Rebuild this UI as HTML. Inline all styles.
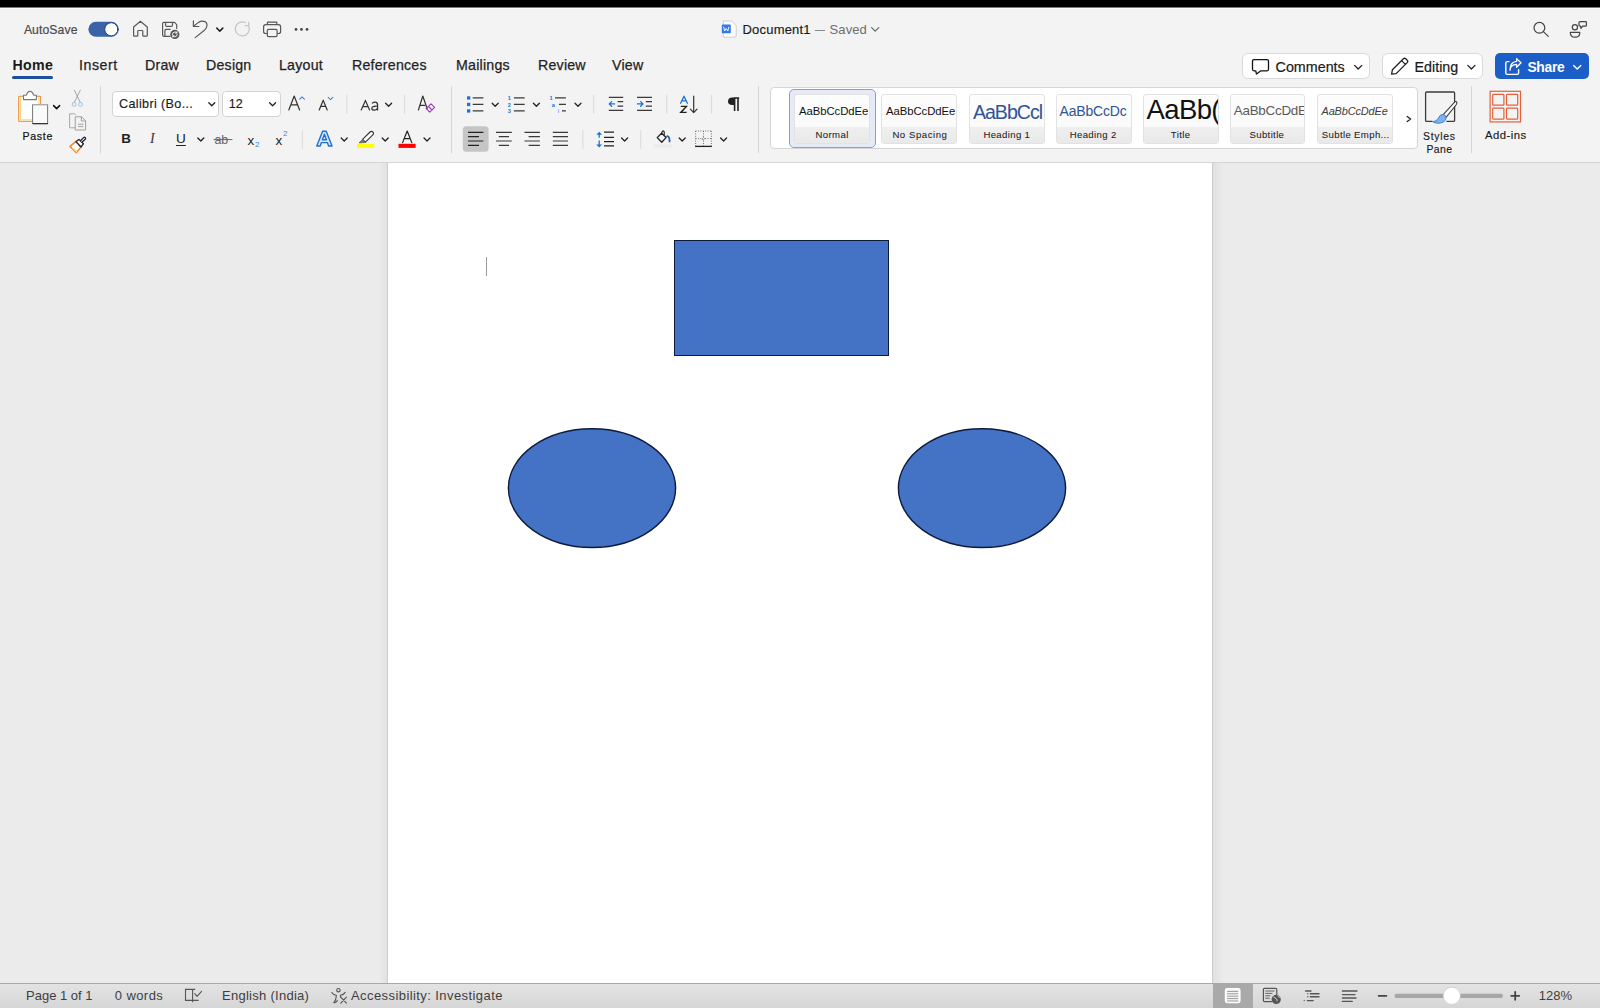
<!DOCTYPE html>
<html><head><meta charset="utf-8">
<style>
*{margin:0;padding:0;box-sizing:border-box}
html,body{width:1600px;height:1008px;overflow:hidden;background:#ebebeb;font-family:"Liberation Sans",sans-serif;}
.a{position:absolute}
.t{position:absolute;white-space:nowrap;line-height:1;font-family:"Liberation Sans",sans-serif;}
svg{position:absolute;overflow:visible}
</style></head><body>
<!-- top black bar -->
<div class="a" style="left:0;top:0;width:1600px;height:7px;background:#000"></div>
<!-- toolbar bg -->
<div class="a" style="left:0;top:7px;width:1600px;height:155px;background:#f3f3f3"></div>
<div class="a" style="left:0;top:7px;width:1600px;height:1px;background:#7a7a7a"></div>
<div class="a" style="left:0;top:8px;width:1600px;height:1px;background:#fcfcfc"></div>
<div class="a" style="left:0;top:162px;width:1600px;height:1px;background:#d4d4d4"></div>
<!-- page -->
<div class="a" style="left:379px;top:163px;width:8px;height:820px;background:linear-gradient(90deg,#ebebeb,#e1e1e1)"></div>
<div class="a" style="left:387px;top:163px;width:1px;height:820px;background:#cecece"></div>
<div class="a" style="left:388px;top:163px;width:824px;height:820px;background:#fff"></div>
<div class="a" style="left:1212px;top:163px;width:1px;height:820px;background:#cecece"></div>
<div class="a" style="left:1213px;top:163px;width:10px;height:820px;background:linear-gradient(90deg,#e0e0e0,#ebebeb)"></div>
<!-- status bar -->
<div class="a" style="left:0;top:983px;width:1600px;height:1px;background:#a8a8a8"></div>
<div class="a" style="left:0;top:984px;width:1600px;height:24px;background:linear-gradient(#e3e3e3,#d6d6d6)"></div>

<!-- document content -->
<div class="a" style="left:486px;top:257px;width:1px;height:19px;background:#9a9a9a"></div>
<div class="a" style="left:674px;top:240px;width:215px;height:116px;background:#4472c4;border:1.5px solid #0e1a3c"></div>
<svg style="left:0;top:0" width="1600" height="1008">
<ellipse cx="592" cy="488.1" rx="83.6" ry="59.4" fill="#4472c4" stroke="#0e1a3c" stroke-width="1.4"/>
<ellipse cx="982" cy="488.1" rx="83.6" ry="59.4" fill="#4472c4" stroke="#0e1a3c" stroke-width="1.4"/>
</svg>

<!-- TITLE ROW -->
<div class="t" style="left:23.9px;top:24.2px;letter-spacing:0.1px;font-size:12.2px;color:#4a4a4a;-webkit-text-stroke:0.2px #4a4a4a">AutoSave</div>


<!-- TITLE ICONS -->
<svg style="left:0;top:0" width="1600" height="170">
<g fill="none" stroke="#585858" stroke-width="1.2" stroke-linejoin="round" stroke-linecap="round">
<!-- toggle -->
<rect x="88.4" y="21.8" width="30.4" height="15" rx="7.5" fill="#3a63a8" stroke="none"/>
<circle cx="111.3" cy="29.3" r="6.6" fill="#fff" stroke="#1e3c78" stroke-width="1"/>
<!-- home -->
<path d="M133.6 27 L140.4 21.3 L147.3 27 V35.4 Q147.3 36.2 146.5 36.2 H143.6 Q142.8 36.2 142.8 35.4 V31.3 Q142.8 30.5 142 30.5 H138.6 Q137.8 30.5 137.8 31.3 V35.4 Q137.8 36.2 137 36.2 H134.4 Q133.6 36.2 133.6 35.4 Z"/>
<!-- save -->
<path d="M170 36.3 H163.8 Q162.6 36.3 162.6 35.1 V23.6 Q162.6 22.4 163.8 22.4 H174.6 L176.7 24.6 V28.6"/>
<path d="M165.6 22.6 V25.3 Q165.6 26.4 166.7 26.4 H171.4 Q172.5 26.4 172.5 25.3 V22.6"/>
<path d="M164.9 35.8 V30.6 Q164.9 29.4 166.1 29.4 H170.2"/>
<circle cx="174.8" cy="34.4" r="4.6" fill="#555" stroke="none"/>
<path d="M172.2 34.6 Q172.4 31.8 175.4 31.9 L176.6 32.6 M176.9 31.6 V33.1 H175.5 M177.4 34.2 Q177.2 37 174.2 36.9 L173 36.2 M172.7 37.2 V35.7 H174.1" stroke="#fff" stroke-width="0.9"/>
<!-- undo -->
<path d="M193.4 20.8 V26.5 H198.9"/>
<path d="M193.6 26.3 L198.5 22.4 Q201.5 20.2 204.8 21.6 Q207.6 23.2 206.8 26.6 Q206.2 28.4 204.4 30.2 L195.2 37.6"/>
<path d="M216.8 28.1 L219.8 31.1 L222.8 28.1" stroke="#222" stroke-width="1.5"/>
<!-- redo -->
<path d="M248.5 25.6 A7 7 0 1 1 245.4 22.6" stroke="#c6c6c6" stroke-width="1.2"/>
<path d="M248.7 22.2 V25.7 H245.2" stroke="#c6c6c6" stroke-width="1.2"/>
<!-- print -->
<path d="M267.4 24.4 V22.6 Q267.4 22.2 267.8 22.2 H276.4 Q276.8 22.2 276.8 22.6 V24.4"/>
<path d="M267.2 33.5 H265.6 Q263.6 33.5 263.6 31.5 V26.8 Q263.6 24.7 265.7 24.7 H278.5 Q280.6 24.7 280.6 26.8 V31.5 Q280.6 33.5 278.6 33.5 H277.1"/>
<rect x="267.3" y="29.4" width="9.8" height="7.2" rx="1.3" fill="#f3f3f3"/>
<!-- dots -->
<circle cx="296" cy="29.4" r="1.35" fill="#444" stroke="none"/>
<circle cx="301.5" cy="29.4" r="1.35" fill="#444" stroke="none"/>
<circle cx="307" cy="29.4" r="1.35" fill="#444" stroke="none"/>
<!-- search -->
<circle cx="1539.4" cy="27.8" r="5.4" stroke="#444"/>
<path d="M1543.4 31.6 L1548.3 36.4" stroke="#444"/>
<!-- collab -->
<circle cx="1574.9" cy="27.2" r="2.6" stroke="#444"/>
<path d="M1570.3 32.4 H1579.8 Q1579.8 37.2 1575 37.2 Q1570.3 37.2 1570.3 32.4 Z" stroke="#444"/>
<path d="M1580 21.6 H1585.6 Q1586.4 21.6 1586.4 22.4 V25.4 Q1586.4 26.2 1585.6 26.2 H1582.6 L1581 28.4 L1580.6 26.2 Q1579 26.2 1579 25.4 V22.6 Q1579 21.6 1580 21.6 Z" stroke="#444"/>
</g>
</svg>


<!-- TITLE -->
<svg style="left:0;top:0" width="1600" height="170">
<path d="M723.3 21 H731.6 L736.2 25.4 V36.4 Q736.2 37.2 735.4 37.2 H724.1 Q723.3 37.2 723.3 36.4 Z" fill="#fdfdfd" stroke="#c9c9c9" stroke-width="0.9"/>
<rect x="721.8" y="24.6" width="9" height="8.6" rx="0.8" fill="#2f7be8"/>
<path d="M723.6 26.8 L724.6 31 L726.2 28.4 L727.8 31 L728.9 26.8" fill="none" stroke="#fff" stroke-width="0.9"/>
<path d="M871.6 27.6 L875.2 31.2 L878.8 27.6" fill="none" stroke="#666" stroke-width="1.2" stroke-linecap="round" stroke-linejoin="round"/>
</svg>
<div class="t" style="left:742.5px;top:22.6px;font-size:13px;color:#1a1a1a;letter-spacing:0.2px;-webkit-text-stroke:0.15px #1a1a1a">Document1</div>
<div class="a" style="left:815px;top:29.6px;width:10.2px;height:1.1px;background:#8a8a8a"></div>
<div class="t" style="left:829.6px;top:22.6px;font-size:13px;color:#6e6e6e;letter-spacing:0.1px">Saved</div>

<!-- RIGHT BUTTONS -->
<div class="a" style="left:1242px;top:53px;width:127.8px;height:26px;border-radius:6px;background:#fff;border:1px solid #d9d9d9"></div>
<div class="a" style="left:1381.5px;top:53px;width:101.5px;height:26px;border-radius:6px;background:#fff;border:1px solid #d9d9d9"></div>
<div class="a" style="left:1494.6px;top:53.4px;width:94.4px;height:25.8px;border-radius:5px;background:#1b5ec7"></div>
<div class="t" style="left:1275.6px;top:60.2px;font-size:14.3px;color:#1a1a1a;-webkit-text-stroke:0.2px #1a1a1a">Comments</div>
<div class="t" style="left:1414.5px;top:60.2px;font-size:14.3px;color:#1a1a1a;-webkit-text-stroke:0.2px #1a1a1a">Editing</div>
<div class="t" style="left:1527.4px;top:60.6px;font-size:13.8px;color:#fff;font-weight:bold;letter-spacing:-0.25px">Share</div>
<svg style="left:0;top:0" width="1600" height="170">
<g fill="none" stroke-linecap="round" stroke-linejoin="round">
<path d="M1254 59.6 H1267 Q1268.5 59.6 1268.5 61.1 V69.3 Q1268.5 70.8 1267 70.8 H1261 L1256.4 74 L1255.8 70.8 H1254 Q1252.5 70.8 1252.5 69.3 V61.1 Q1252.5 59.6 1254 59.6 Z" stroke="#111" stroke-width="1.3"/>
<path d="M1354.6 65.4 L1358.2 69 L1361.8 65.4" stroke="#222" stroke-width="1.3"/>
<path d="M1391.6 74.2 L1392.4 69.8 L1403.4 58.8 Q1404.6 57.6 1405.8 58.8 L1407.2 60.2 Q1408.4 61.4 1407.2 62.6 L1396.2 73.6 Z M1401.6 60.6 L1405.4 64.4" stroke="#222" stroke-width="1.3"/>
<path d="M1467.8 65.4 L1471.4 69 L1475 65.4" stroke="#222" stroke-width="1.3"/>
<path d="M1518.6 69.6 V73 Q1518.6 74.4 1517.2 74.4 H1507.2 Q1505.8 74.4 1505.8 73 V63 Q1505.8 61.6 1507.2 61.6 H1509" stroke="#fff" stroke-width="1.4"/>
<path d="M1510 70.2 Q1510.4 64.8 1516.6 64.4 V67.4 L1521 62.8 L1516.6 58.6 V61.4 Q1509.8 62.2 1510 70.2 Z" stroke="#fff" stroke-width="1.3"/>
<path d="M1573.6 65.4 L1577.2 69 L1580.8 65.4" stroke="#fff" stroke-width="1.4"/>
</g>
</svg>


<!-- RIBBON GROUP 1: CLIPBOARD -->
<svg style="left:0;top:0" width="1600" height="170">
<g fill="none" stroke-linecap="round" stroke-linejoin="round">
<rect x="19.1" y="96.3" width="21.5" height="25" fill="#fff" stroke="#f0872a" stroke-width="1"/>
<path d="M20.6 97.8 V119.8 H39 V97.8" stroke="#f8d98c" stroke-width="1.3"/>
<path d="M23.5 95.2 H26.4 Q27.6 91.4 30 91.4 Q32.4 91.4 33.6 95.2 H36.4 V99.6 H23.5 Z" fill="#fff" stroke="#777" stroke-width="1.1"/>
<rect x="33" y="104.6" width="14.6" height="19" fill="#fafafa" stroke="#777" stroke-width="1"/>
<path d="M33 104.6 H47.6" stroke="#aaa" stroke-width="1.2"/>
<path d="M33 123.6 H47.6" stroke="#333" stroke-width="1.2"/>
<path d="M53.6 105.6 L56.6 108.6 L59.6 105.6" stroke="#111" stroke-width="1.5"/>
<!-- scissors -->
<path d="M74.4 90.2 L80.4 102.6 M80.3 90.2 L74.2 102.6" stroke="#9a9a9a" stroke-width="0.9"/>
<circle cx="74.1" cy="104.4" r="1.9" stroke="#a9c5ea" stroke-width="1.1" fill="#f3f3f3"/>
<circle cx="80.5" cy="104.4" r="1.9" stroke="#a9c5ea" stroke-width="1.1" fill="#f3f3f3"/>
<!-- copy -->
<path d="M75 127.8 H69.6 V113.8 H74.6 L75.8 115" stroke="#a8a8a8" stroke-width="1"/>
<path d="M75.6 116.8 H81.6 L85.6 120.8 V130 H75.6 Z" fill="#f3f3f3" stroke="#a0a0a0" stroke-width="1"/>
<path d="M81.4 117 V121 H85.4 M78.4 124.2 H83 M78.4 126.6 H83" stroke="#a0a0a0" stroke-width="1"/>
<!-- format painter -->
<path d="M70 146.4 L75.8 141.6 L81 147 L76.4 152.6 Z" fill="#fff" stroke="#f0872a" stroke-width="1.5"/>
<path d="M73 148.4 L76.6 151.4" stroke="#f8d98c" stroke-width="1.4"/>
<path d="M76 141.6 L79 139.4 L83.4 143.8 L81 147 Z" fill="#fff" stroke="#1c2233" stroke-width="1.3"/>
<path d="M80.6 140.8 L83.6 137.6 Q84.4 136.8 85.2 137.6 Q86 138.4 85.2 139.2 L82 142.2" fill="#fff" stroke="#1c2233" stroke-width="1.3"/>
</g>
<rect x="100" y="86" width="1" height="67.5" fill="#d6d6d6"/>
</svg>
<div class="t" style="left:22.4px;top:130.6px;font-size:10.6px;color:#111;letter-spacing:0.7px;-webkit-text-stroke:0.2px #111">Paste</div>

<!-- RIBBON GROUP 2: FONT -->
<div class="a" style="left:112.3px;top:91.3px;width:107px;height:26.2px;border-radius:4px;background:#fff;border:1px solid #d3d3d3"></div>
<div class="a" style="left:222px;top:91.3px;width:58.6px;height:26.2px;border-radius:4px;background:#fff;border:1px solid #d3d3d3"></div>
<div class="t" style="left:119px;top:98px;font-size:12.6px;color:#1a1a1a;letter-spacing:0.35px;-webkit-text-stroke:0.15px #1a1a1a">Calibri (Bo...</div>
<div class="t" style="left:228.8px;top:98px;font-size:12.6px;color:#1a1a1a;-webkit-text-stroke:0.15px #1a1a1a">12</div>
<svg style="left:0;top:0" width="1600" height="170">
<g fill="none" stroke-linecap="round" stroke-linejoin="round" stroke="#222" stroke-width="1.3">
<path d="M208.8 102.8 L211.8 105.8 L214.8 102.8"/>
<path d="M269.6 102.8 L272.6 105.8 L275.6 102.8"/>
<!-- grow -->
<path d="M288.8 110 L294.2 96 L299.6 110 M290.8 104.8 H297.6" stroke="#333" stroke-width="1.2"/>
<path d="M299.6 99.2 L302 97 L304.4 99.2" stroke="#3a86d9" stroke-width="1.1"/>
<!-- shrink -->
<path d="M319.2 110 L323.2 100.2 L327.2 110 M320.7 106.4 H325.7" stroke="#333" stroke-width="1.2"/>
<path d="M328.2 97.4 L330.5 99.6 L332.8 97.4" stroke="#3a86d9" stroke-width="1.1"/>
<!-- Aa -->
<path d="M361.2 110 L365.4 100.4 L369.6 110 M362.7 106.6 H368.1" stroke="#333" stroke-width="1.2"/>
<path d="M372.4 103.2 Q373.6 102 375.4 102.2 Q377.6 102.5 377.6 105 V110 M377.6 106.2 Q372 105.8 371.8 108.2 Q371.8 110.2 374.2 110.2 Q376.6 110.2 377.6 108" stroke="#333" stroke-width="1.2"/>
<path d="M385.6 103.2 L388.6 106.2 L391.6 103.2"/>
<!-- clear format -->
<path d="M418.4 110 L422.8 96 L427.2 108.8 M419.8 105.4 H424.6" stroke="#333" stroke-width="1.2"/>
<path d="M426.2 108.6 L431 103.8 L434.6 107.4 L429.8 112.2 Z M428.4 106.4 L432 110" stroke="#a33bb8" stroke-width="1.2"/>
<!-- row 2 -->
<path d="M197.8 138 L200.8 141 L203.8 138"/>
<path d="M341.2 138 L344.2 141 L347.2 138"/>
<path d="M382.2 138 L385.2 141 L388.2 138"/>
<path d="M424 138 L427 141 L430 138"/>
<!-- strike ab -->
<path d="M214 139.6 H232" stroke="#666" stroke-width="1"/>
<!-- text effect A -->
<path d="M316.8 146 L322.6 131.2 H326.2 L332 146 H328.6 L327.4 142.6 H321.4 L320.2 146 Z M322.4 139.8 H326.4 L324.4 134.2 Z" fill="#dbe8f8" stroke="#1c6fd6" stroke-width="1.4"/>
<!-- highlighter -->
<path d="M362.6 139.4 L370 132 Q371.4 130.6 372.8 132 Q374.2 133.4 372.8 134.8 L365.4 142.2 Z" fill="#fff" stroke="#333" stroke-width="1.1"/>
<path d="M362.6 139.4 L359 142.8 L361.6 142.8 L365.4 142.2" fill="#777" stroke="#555" stroke-width="0.8"/>
<rect x="357" y="143.8" width="17.3" height="4.1" fill="#ffff00" stroke="none"/>
<!-- font color A -->
<path d="M402.6 142.6 L407.2 131 L411.8 142.6 M404.3 138.6 H410.1" stroke="#222" stroke-width="1.2"/>
<rect x="398.5" y="143.8" width="17.1" height="4.1" fill="#ff0000" stroke="none"/>
</g>
<rect x="346.3" y="95" width="1" height="18.7" fill="#d9d9d9"/>
<rect x="404.1" y="95" width="1" height="18.7" fill="#d9d9d9"/>
<rect x="301.8" y="130" width="1" height="18.8" fill="#d9d9d9"/>
</svg>
<div class="t" style="left:121.2px;top:132.2px;font-size:13.4px;font-weight:bold;color:#222">B</div>
<div class="t" style="left:150px;top:132px;font-size:14px;font-style:italic;font-family:'Liberation Serif',serif;color:#333">I</div>
<div class="t" style="left:176px;top:132.2px;font-size:13.6px;color:#222;text-decoration:underline;text-underline-offset:1.5px">U</div>
<div class="t" style="left:214.4px;top:134.2px;font-size:12.4px;color:#666">ab</div>
<div class="t" style="left:247.4px;top:133.6px;font-size:13.4px;color:#222">x</div>
<div class="t" style="left:255px;top:140.6px;font-size:8px;color:#3a86d9">2</div>
<div class="t" style="left:275.4px;top:133.6px;font-size:13.4px;color:#222">x</div>
<div class="t" style="left:283px;top:130px;font-size:8px;color:#3a86d9">2</div>


<!-- RIBBON GROUP 3: PARAGRAPH -->
<svg style="left:0;top:0" width="1600" height="170">
<rect x="451" y="86.4" width="1" height="67" fill="#d6d6d6"/>
<rect x="593.2" y="95" width="1" height="18.7" fill="#d9d9d9"/>
<rect x="666.2" y="95" width="1" height="18.7" fill="#d9d9d9"/>
<rect x="711.1" y="95" width="1" height="18.7" fill="#d9d9d9"/>
<rect x="758" y="86" width="1" height="67" fill="#d6d6d6"/>
<rect x="582.4" y="130" width="1" height="18.7" fill="#d9d9d9"/>
<rect x="640.2" y="130" width="1" height="18.7" fill="#d9d9d9"/>
<rect x="462.8" y="126.3" width="25.8" height="25.4" rx="3.5" fill="#c5c5c5"/>
<g fill="#1a73d9">
<rect x="467" y="96.3" width="3.3" height="3.3"/><rect x="467" y="102.8" width="3.3" height="3.3"/><rect x="467" y="109.3" width="3.3" height="3.3"/>
</g>
<g fill="none" stroke="#3a3a3a" stroke-width="1.2">
<path d="M472.7 97.8 H483.4 M472.7 104.3 H483.4 M472.7 110.8 H483.4"/>
<path d="M513.9 97.8 H524.7 M513.9 104.3 H524.7 M513.9 110.8 H524.7"/>
<path d="M555 97.8 H565.9 M559 104.3 H565.9 M562 110.8 H565.9"/>
<!-- indents -->
<path d="M608.8 97.4 H623.2 M617.6 101.6 H623.2 M617.6 106.2 H623.2 M608.8 110.4 H623.2"/>
<path d="M637 97.4 H652 M645.8 101.6 H652 M645.8 106.2 H652 M637 110.4 H652"/>
<!-- align lines -->
<path d="M468 132.4 H483.4 M468 136.7 H479 M468 141 H483.4 M468 145.3 H479" stroke="#222"/>
<path d="M496 132.4 H511.8 M498.8 136.7 H509 M496 141 H511.8 M498.8 145.3 H509"/>
<path d="M524.5 132.4 H539.9 M528.6 136.7 H539.9 M524.5 141 H539.9 M528.6 145.3 H539.9"/>
<path d="M552.8 132.4 H568 M552.8 136.7 H568 M552.8 141 H568 M552.8 145.3 H568"/>
<!-- line spacing lines -->
<path d="M604 132.2 H614 M604 137.4 H614 M604 141.6 H614 M604 145.8 H614" stroke="#222"/>
</g>
<g fill="none" stroke="#1a73d9" stroke-width="1.3" stroke-linecap="round" stroke-linejoin="round">
<path d="M614.6 103.9 H609.2 M611.6 101.6 L609.2 103.9 L611.6 106.2"/>
<path d="M637.4 103.9 H643 M640.6 101.6 L643 103.9 L640.6 106.2"/>

</g>
<g fill="none" stroke="#222" stroke-width="1.3" stroke-linecap="round" stroke-linejoin="round">
<path d="M492.2 103.2 L495.2 106.2 L498.2 103.2"/>
<path d="M533.4 103.2 L536.4 106.2 L539.4 103.2"/>
<path d="M575 103.2 L578 106.2 L581 103.2"/>
<path d="M621.6 138 L624.6 141 L627.6 138"/>
<path d="M679.2 138 L682.2 141 L685.2 138"/>
<path d="M720.6 138 L723.6 141 L726.6 138"/>
<!-- sort arrow -->
<path d="M693.7 96.2 V112.6 M690.4 109.2 L693.7 112.6 L697 109.2" stroke="#333" stroke-width="1.2"/>
<path d="M680.8 106.4 H686.4 L680.8 112.4 H686.6" stroke="#222" stroke-width="1.4" stroke-linecap="butt" stroke-linejoin="miter"/>
<path d="M680.6 103.2 L684 96.2 L687.4 103.2 M681.8 100.8 H686.2" stroke="#1a73d9" stroke-width="1.3"/>
<!-- shading bucket -->
<path d="M657.2 137.6 L661.6 133.2 L666.2 137.4 L661.8 142.2 Z" stroke="#222" stroke-width="1.3"/>
<path d="M661.6 133.2 Q662.4 130.2 663.8 131.2 Q664.6 132 664.2 134.6" stroke="#222" stroke-width="1.2"/>
<path d="M667.2 136.2 Q669.6 136.4 669.6 141.4" stroke="#1a5ab0" stroke-width="1.7"/>
<rect x="654" y="144.4" width="17.6" height="3" fill="#ebebeb" stroke="none"/>
<!-- borders -->
<path d="M695.6 131 H711.4 M695.6 131 V146.4 M711.4 131 V146.4 M703.5 131 V146.4 M695.6 138.6 H711.4" stroke="#666" stroke-width="1" stroke-dasharray="0.9 1.5" stroke-linecap="butt"/>
<path d="M702.3 138.6 L703.5 137.4 L704.7 138.6 L703.5 139.8 Z" stroke="#777" stroke-width="0.8" fill="#fff"/>
<path d="M695.2 146.4 H711.8" stroke="#222" stroke-width="1.3" stroke-linecap="butt"/>
</g>
</svg>

<div class="t" style="left:507.8px;top:95.4px;font-size:5.6px;font-weight:bold;color:#1a73d9;line-height:6.5px">1<br>2<br>3</div>
<div class="t" style="left:549.6px;top:95.4px;font-size:5.6px;font-weight:bold;color:#1a73d9;line-height:6.5px">1</div>
<div class="t" style="left:551.8px;top:101.9px;font-size:5.6px;font-weight:bold;color:#1a73d9;line-height:6.5px">a</div>
<div class="t" style="left:557.8px;top:108.4px;font-size:5.6px;color:#1a73d9;line-height:6.5px">i</div>

<svg style="left:0;top:0" width="1600" height="170">
<path d="M596.3 134.8 L599.2 131.8 L602.1 134.8 Z M596.3 144.6 L599.2 147.6 L602.1 144.6 Z" fill="#1a73d9"/>
<path d="M599.2 133.6 V137.8 M599.2 140.4 V145.8" stroke="#1a73d9" stroke-width="1.3"/>
<path d="M733.8 98 H739.2 M734.6 98.2 V111 M738 98.2 V111" stroke="#222" stroke-width="1.6" fill="none"/>
<path d="M734.6 97.4 H732.2 Q728 97.4 728 101.2 Q728 105 732.2 105 H734.6 Z" fill="#222"/>
</svg>
<!-- STYLES GALLERY -->
<div class="a" style="left:769.8px;top:87.3px;width:648px;height:62.2px;border-radius:4px;background:#fff;border:1px solid #d6d6d6"></div>
<div class="a" style="left:789.4px;top:89px;width:86.2px;height:58.5px;border-radius:5px;background:#e4ebf6;border:1.5px solid #7fa2d6"></div>
<div class="a" style="left:794.4px;top:94.3px;width:76.0px;height:50.1px;border-radius:3px;border:1px solid #e2e2e2;background:linear-gradient(#fdfdfd,#f9f9f9);overflow:hidden"></div>
<div class="a" style="left:795.4px;top:126.9px;width:74.0px;height:16.5px;border-radius:0 0 2px 2px;background:linear-gradient(#efefef,#e9e9e9)"></div>
<div class="a" style="left:794.4px;top:94.3px;width:75.0px;height:32px;overflow:hidden"><div class="t" style="left:4.6px;top:11.5px;font-size:11.3px;color:#111;letter-spacing:-0.05px">AaBbCcDdEe</div></div>
<div class="t" style="left:815.6px;top:130.1px;font-size:9.6px;color:#1a1a1a;-webkit-text-stroke:0.05px #1a1a1a;letter-spacing:0.35px">Normal</div>
<div class="a" style="left:881.3px;top:94.3px;width:76.2px;height:50.1px;border-radius:3px;border:1px solid #e2e2e2;background:linear-gradient(#fdfdfd,#f9f9f9);overflow:hidden"></div>
<div class="a" style="left:882.3px;top:126.9px;width:74.2px;height:16.5px;border-radius:0 0 2px 2px;background:linear-gradient(#efefef,#e9e9e9)"></div>
<div class="a" style="left:881.3px;top:94.3px;width:75.2px;height:32px;overflow:hidden"><div class="t" style="left:4.7px;top:11.5px;font-size:11.3px;color:#111;letter-spacing:-0.05px">AaBbCcDdEe</div></div>
<div class="t" style="left:892.4px;top:130.1px;font-size:9.6px;color:#1a1a1a;-webkit-text-stroke:0.05px #1a1a1a;letter-spacing:0.55px">No Spacing</div>
<div class="a" style="left:969.2px;top:94.3px;width:75.4px;height:50.1px;border-radius:3px;border:1px solid #e2e2e2;background:linear-gradient(#fdfdfd,#f9f9f9);overflow:hidden"></div>
<div class="a" style="left:970.2px;top:126.9px;width:73.4px;height:16.5px;border-radius:0 0 2px 2px;background:linear-gradient(#efefef,#e9e9e9)"></div>
<div class="a" style="left:969.2px;top:94.3px;width:74.4px;height:32px;overflow:hidden"><div class="t" style="left:3.7px;top:8.5px;font-size:19.6px;color:#2f5496;letter-spacing:-1px">AaBbCcl</div></div>
<div class="t" style="left:983.4px;top:130.1px;font-size:9.6px;color:#1a1a1a;-webkit-text-stroke:0.05px #1a1a1a;letter-spacing:0.35px">Heading 1</div>
<div class="a" style="left:1055.6px;top:94.3px;width:76.0px;height:50.1px;border-radius:3px;border:1px solid #e2e2e2;background:linear-gradient(#fdfdfd,#f9f9f9);overflow:hidden"></div>
<div class="a" style="left:1056.6px;top:126.9px;width:74.0px;height:16.5px;border-radius:0 0 2px 2px;background:linear-gradient(#efefef,#e9e9e9)"></div>
<div class="a" style="left:1055.6px;top:94.3px;width:75.0px;height:32px;overflow:hidden"><div class="t" style="left:4.0px;top:9.5px;font-size:14px;color:#2f5496;letter-spacing:-0.2px">AaBbCcDc</div></div>
<div class="t" style="left:1069.7px;top:130.1px;font-size:9.6px;color:#1a1a1a;-webkit-text-stroke:0.05px #1a1a1a;letter-spacing:0.35px">Heading 2</div>
<div class="a" style="left:1143.1px;top:94.3px;width:75.7px;height:50.1px;border-radius:3px;border:1px solid #e2e2e2;background:linear-gradient(#fdfdfd,#f9f9f9);overflow:hidden"></div>
<div class="a" style="left:1144.1px;top:126.9px;width:73.7px;height:16.5px;border-radius:0 0 2px 2px;background:linear-gradient(#efefef,#e9e9e9)"></div>
<div class="a" style="left:1143.1px;top:94.3px;width:74.7px;height:32px;overflow:hidden"><div class="t" style="left:3.4px;top:1.7px;font-size:27.5px;color:#111;letter-spacing:-0.6px">AaBb(</div></div>
<div class="t" style="left:1170.8px;top:130.1px;font-size:9.6px;color:#1a1a1a;-webkit-text-stroke:0.05px #1a1a1a;letter-spacing:0.35px">Title</div>
<div class="a" style="left:1230px;top:94.3px;width:75.4px;height:50.1px;border-radius:3px;border:1px solid #e2e2e2;background:linear-gradient(#fdfdfd,#f9f9f9);overflow:hidden"></div>
<div class="a" style="left:1231px;top:126.9px;width:73.4px;height:16.5px;border-radius:0 0 2px 2px;background:linear-gradient(#efefef,#e9e9e9)"></div>
<div class="a" style="left:1230px;top:94.3px;width:74.4px;height:32px;overflow:hidden"><div class="t" style="left:3.8px;top:9.7px;font-size:13.4px;color:#5a5a5a;letter-spacing:-0.25px">AaBbCcDdE</div></div>
<div class="t" style="left:1249.5px;top:130.1px;font-size:9.6px;color:#1a1a1a;-webkit-text-stroke:0.05px #1a1a1a;letter-spacing:0.35px">Subtitle</div>
<div class="a" style="left:1317.2px;top:94.3px;width:75.6px;height:50.1px;border-radius:3px;border:1px solid #e2e2e2;background:linear-gradient(#fdfdfd,#f9f9f9);overflow:hidden"></div>
<div class="a" style="left:1318.2px;top:126.9px;width:73.6px;height:16.5px;border-radius:0 0 2px 2px;background:linear-gradient(#efefef,#e9e9e9)"></div>
<div class="a" style="left:1317.2px;top:94.3px;width:74.6px;height:32px;overflow:hidden"><div class="t" style="left:4.3px;top:11.7px;font-size:10.9px;color:#404040;font-style:italic;letter-spacing:-0.1px">AaBbCcDdEe</div></div>
<div class="t" style="left:1321.8px;top:130.1px;font-size:9.6px;color:#1a1a1a;-webkit-text-stroke:0.05px #1a1a1a;letter-spacing:0.35px">Subtle Emph...</div>
<svg style="left:0;top:0" width="1600" height="170">
<path d="M1407.2 116.4 L1410.6 119 L1407.2 121.6" fill="none" stroke="#222" stroke-width="1.3" stroke-linecap="round" stroke-linejoin="round"/>
<path d="M1432.6 121.4 H1426.6 Q1425.6 121.4 1425.6 120.4 V93 Q1425.6 92 1426.6 92 H1453.6 Q1454.6 92 1454.6 93 V120.4 Q1454.6 121.4 1453.6 121.4 H1446.4" fill="none" stroke="#3c3c3c" stroke-width="1.3"/>
<path d="M1443.2 114.6 L1454.4 102.4 Q1456.2 100.8 1456.8 102.2 Q1457.2 103.4 1456 105 L1446 117.4 Z" fill="#fff" stroke="#3c3c3c" stroke-width="1.1"/>
<path d="M1443 114.4 Q1446.6 115.2 1446 118.6 Q1444.6 123.4 1437.4 123.2 Q1434.6 123 1433 121.8 Q1437.2 121.2 1438.6 117.8 Q1440 114.2 1443 114.4 Z" fill="#7fb1ea" stroke="#2a78d6" stroke-width="0.9"/>
<rect x="1471" y="86.1" width="1" height="67" fill="#d6d6d6"/>
<g fill="none" stroke="#e5603a" stroke-width="1.2">
<rect x="1490.1" y="91.3" width="30.4" height="30.6"/>
<rect x="1492.7" y="94.4" width="11.2" height="10.8" rx="0.8"/>
<rect x="1506.5" y="94.4" width="11.2" height="10.8" rx="0.8"/>
<rect x="1492.7" y="108.2" width="11.2" height="10.9" rx="0.8"/>
<rect x="1506.5" y="108.2" width="11.2" height="10.9" rx="0.8"/>
</g>
</svg>
<div class="t" style="left:1423px;top:131.5px;font-size:10.4px;color:#1a1a1a;letter-spacing:0.75px;-webkit-text-stroke:0.15px #1a1a1a">Styles</div>
<div class="t" style="left:1426.5px;top:144.5px;font-size:10.4px;color:#1a1a1a;letter-spacing:0.4px;-webkit-text-stroke:0.15px #1a1a1a">Pane</div>
<div class="t" style="left:1485.1px;top:129.6px;font-size:11.3px;color:#1a1a1a;letter-spacing:0.45px;-webkit-text-stroke:0.15px #1a1a1a">Add-ins</div>


<!-- STATUS BAR -->
<div class="a" style="left:1213px;top:984px;width:40px;height:24px;background:#a9a9a9"></div>
<div class="t" style="left:26px;top:989.4px;font-size:13px;color:#3e3e3e">Page 1 of 1</div>
<div class="t" style="left:114.7px;top:989.4px;font-size:13px;color:#3e3e3e;letter-spacing:0.43px">0 words</div>
<div class="t" style="left:222px;top:989.4px;font-size:13px;color:#3e3e3e;letter-spacing:0.27px">English (India)</div>
<div class="t" style="left:351px;top:989.4px;font-size:13px;color:#3e3e3e;letter-spacing:0.42px">Accessibility: Investigate</div>
<div class="t" style="left:1538.8px;top:989.4px;font-size:13px;color:#3e3e3e">128%</div>
<svg style="left:0;top:960px" width="1600" height="48">
<g fill="none" stroke="#555" stroke-width="1.1" stroke-linecap="round" stroke-linejoin="round">
<!-- proofing book -->
<path d="M185.5 29.4 H192.6 V40.4 H185.5 Z M192.6 29.4 H195.2 M192.6 40.4 H198.6 M192.6 40.4 V42.2" stroke="#555" stroke-width="1.1" stroke-linecap="butt" stroke-linejoin="miter"/>
<path d="M194.8 33.6 L197 36.4 L201.6 31.4" />
<!-- accessibility -->
<circle cx="338.4" cy="30.2" r="1.7"/>
<path d="M331.8 32.4 Q333.2 35 336.4 35.2 L335.8 39 Q335.2 41.2 333.8 42.6 Q335.6 43 337.4 40.6 M340.4 35.2 Q343.6 35 345.2 32.4 M340.4 35.2 L340.6 37.2"/>
<path d="M340.8 37.2 L346.4 43.2 M346.4 37.2 L340.8 43.2" stroke-width="1.1"/>
<!-- zoom -->
<path d="M1378.6 35.8 H1386.4" stroke="#444" stroke-width="1.8"/>
<path d="M1511.2 35.8 H1519.2 M1515.2 31.8 V39.8" stroke="#444" stroke-width="1.8"/>
<!-- outline view -->
<path d="M1305.6 31 H1311 M1307.8 33.8 L1307.8 33.8 M1310.4 33.8 H1319 M1307.8 36.8 L1307.8 36.8 M1310.4 36.8 H1319 M1304.2 40.6 L1304.2 40.6 M1307.4 40.6 H1313.2" stroke="#555" stroke-width="1.4"/>
<!-- draft view -->
<path d="M1342.4 31 H1357 M1342.4 34.6 H1355 M1342.4 38 H1356 M1342.4 41.4 H1352.2" stroke="#555" stroke-width="1.4"/>
<!-- web layout -->
<path d="M1271.6 41.6 H1264.6 Q1263.4 41.6 1263.4 40.4 V29.6 Q1263.4 28.4 1264.6 28.4 H1275.6 Q1276.8 28.4 1276.8 29.6 V35" stroke="#555" stroke-width="1.2"/>
<path d="M1265.6 31 H1274.2 M1265.6 33.4 H1272 M1265.6 35.8 H1270 M1265.6 38.2 H1269.4" stroke="#666" stroke-width="1"/>
</g>
<circle cx="1276.2" cy="39.4" r="4.6" fill="#555"/>
<path d="M1273.4 37 Q1275.2 36.8 1275.6 38.6 Q1277.8 39 1277 41.2 M1277.6 35.6 Q1278.2 37 1279.8 37.4" fill="none" stroke="#ddd" stroke-width="0.9"/>
<!-- print layout (selected) -->
<rect x="1225.4" y="28.6" width="14.6" height="14" rx="1.8" fill="#f4f4f4" stroke="#fff" stroke-width="1.2"/>
<path d="M1227.2 31.4 H1238.2 M1227.2 33.8 H1238.2 M1227.2 36.2 H1238.2 M1227.2 38.6 H1238.2 M1227.2 41 H1238.2" stroke="#9a9a9a" stroke-width="1"/>
<!-- slider -->
<rect x="1394.5" y="33.8" width="108.5" height="4.2" rx="2.1" fill="#a6a6a6"/>
<circle cx="1451.8" cy="35.8" r="8.6" fill="#fff" stroke="#c4c4c4" stroke-width="0.6"/>
</svg>

<!-- TABS -->
<div class="t" style="left:12.5px;top:57.5px;font-size:14.2px;font-weight:bold;color:#1a1a1a;letter-spacing:0.3px">Home</div>
<div class="a" style="left:12px;top:76px;width:41px;height:3px;border-radius:2px;background:#1d4fa0"></div>
<div class="t" style="left:79px;top:57.5px;font-size:14.2px;color:#1f1f1f;letter-spacing:0.55px;-webkit-text-stroke:0.25px #1f1f1f">Insert</div>
<div class="t" style="left:145px;top:57.5px;font-size:14.2px;color:#1f1f1f;letter-spacing:0.22px;-webkit-text-stroke:0.25px #1f1f1f">Draw</div>
<div class="t" style="left:206px;top:57.5px;font-size:14.2px;color:#1f1f1f;letter-spacing:0.22px;-webkit-text-stroke:0.25px #1f1f1f">Design</div>
<div class="t" style="left:279px;top:57.5px;font-size:14.2px;color:#1f1f1f;letter-spacing:0.22px;-webkit-text-stroke:0.25px #1f1f1f">Layout</div>
<div class="t" style="left:352px;top:57.5px;font-size:14.2px;color:#1f1f1f;letter-spacing:0.22px;-webkit-text-stroke:0.25px #1f1f1f">References</div>
<div class="t" style="left:456px;top:57.5px;font-size:14.2px;color:#1f1f1f;letter-spacing:0.22px;-webkit-text-stroke:0.25px #1f1f1f">Mailings</div>
<div class="t" style="left:538px;top:57.5px;font-size:14.2px;color:#1f1f1f;letter-spacing:0.22px;-webkit-text-stroke:0.25px #1f1f1f">Review</div>
<div class="t" style="left:612px;top:57.5px;font-size:14.2px;color:#1f1f1f;letter-spacing:0.22px;-webkit-text-stroke:0.25px #1f1f1f">View</div>

</body></html>
